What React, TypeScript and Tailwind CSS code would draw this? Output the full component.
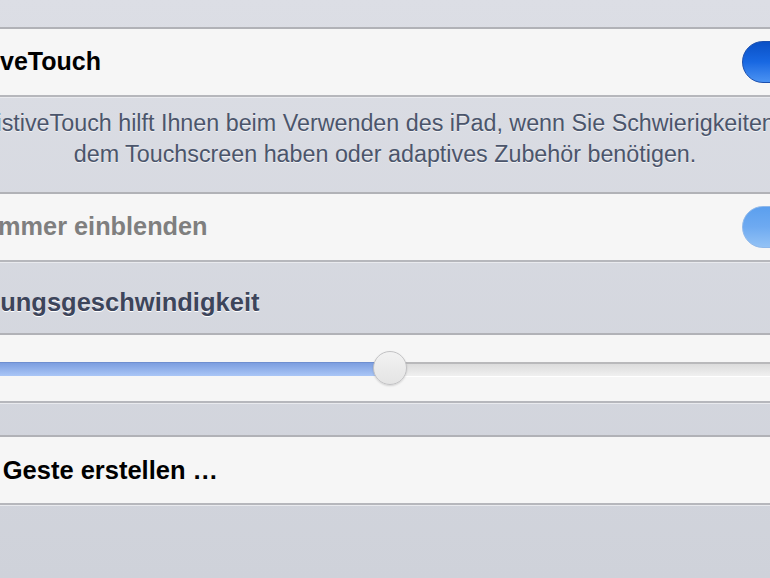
import type { ReactNode } from 'react'

const font = { fontFamily: '"Liberation Sans", Helvetica, Arial, sans-serif' }

function Cell({ children, className = '' }: { children: ReactNode; className?: string }) {
    return (
        <div
            className={`h-[70px] flex items-center border-t-2 border-b-2 border-t-[#b1b2b7] border-b-[#b6b7bc] bg-[#f6f6f6] shadow-[0_1px_0_#e9eaee] pl-[18px] pr-[8px] ${className}`}
        >
            {children}
        </div>
    )
}

function Toggle({ disabled = false }: { disabled?: boolean }) {
    return (
        <div
            className={`ml-auto w-[120px] h-[42px] rounded-full border ${
                disabled
                    ? 'border-[#8fb8ea] bg-linear-to-b from-[#5b9fee] via-[#6eaaf1] to-[#93c2f5]'
                    : 'border-[#1b4fae] bg-linear-to-b from-[#0a50c6] via-[#1868e2] to-[#4a92f2]'
            }`}
        />
    )
}

export default function App() {
    return (
        <div
            className="w-[770px] h-[578px] overflow-hidden bg-linear-to-b from-[#dcdee5] to-[#cfd2da]"
            style={font}
        >
            <div className="ml-[-100px] w-[970px] flex flex-col">
                <div className="h-[27px]" />

                <Cell>
                    <span className="text-[25px] font-bold text-black whitespace-nowrap">AssistiveTouch</span>
                    <Toggle />
                </Cell>

                <div className="h-[95px] flex flex-col items-center pt-[11px] text-[23.3px] leading-[31px] text-[#4b556b] [text-shadow:0_1px_0_#ffffffaa] whitespace-nowrap">
                    <p>AssistiveTouch hilft Ihnen beim Verwenden des iPad, wenn Sie Schwierigkeiten mit</p>
                    <p>dem Touchscreen haben oder adaptives Zubehör benötigen.</p>
                </div>

                <Cell>
                    <span className="text-[25.3px] font-bold text-[#7f7f7f] whitespace-nowrap">Menü immer einblenden</span>
                    <Toggle disabled />
                </Cell>

                <div className="h-[71px] flex items-end pb-[12px] pl-[18px]">
                    <span className="text-[25.5px] font-bold text-[#3d455b] [text-shadow:0_1px_0_#ffffff] whitespace-nowrap">
                        Bewegungsgeschwindigkeit
                    </span>
                </div>

                <Cell>
                    <div className="relative w-full h-[14px] mt-[2px] flex">
                        <div className="w-[472px] h-full rounded-l-full border-t border-[#6f8fd0] bg-linear-to-b from-[#7c9ee0] to-[#aac6f6]" />
                        <div className="flex-1 h-full rounded-r-full border-t-2 border-[#b9b9bb] bg-linear-to-b from-[#dcdcdc] to-[#f0f0f0] shadow-[0_1px_0_#ffffff]" />
                        <div className="absolute left-[455px] top-[-11px] w-[34px] h-[34px] rounded-full border border-[#c2c2c4] bg-linear-to-b from-[#f2f2f2] to-[#e4e4e4] shadow-[0_1px_2px_rgba(0,0,0,0.15)]" />
                    </div>
                </Cell>

                <div className="h-[32px]" />

                <Cell>
                    <span className="text-[25.5px] font-bold text-black whitespace-nowrap -ml-[6px]">Eigene Geste erstellen …</span>
                </Cell>
            </div>
        </div>
    )
}
